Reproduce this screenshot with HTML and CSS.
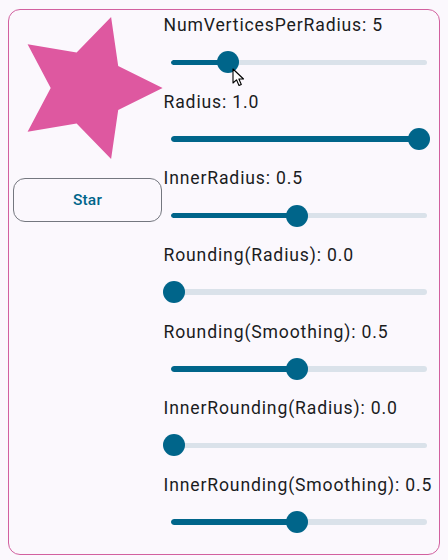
FILE: index.html
```html
<!DOCTYPE html>
<html>
<head>
<meta charset="utf-8">
<link rel="stylesheet" href="styles.css">
</head>
<body>
<div class="frame">
  <div class="left">
    <svg class="star" width="150" height="150" viewBox="0 0 150 150">
      <polygon fill="#de58a0" points="149.6,75 105.2,96.9 98.1,146 63.6,110.5 14.6,118.8 37.7,75 14.6,31.2 63.6,39.5 98.1,4 105.2,53.1"/>
    </svg>
    <button class="btn">Star</button>
  </div>
  <div class="right">
    <div class="item"><div class="label">NumVerticesPerRadius: 5</div><div class="slider"><div class="track"><div class="active" style="width:22.2%"></div></div><div class="thumb" style="--f:0.222"></div></div></div>
    <div class="item"><div class="label">Radius: 1.0</div><div class="slider"><div class="track"><div class="active" style="width:100%"></div></div><div class="thumb" style="--f:1"></div></div></div>
    <div class="item"><div class="label">InnerRadius: 0.5</div><div class="slider"><div class="track"><div class="active" style="width:50%"></div></div><div class="thumb" style="--f:0.5"></div></div></div>
    <div class="item"><div class="label">Rounding(Radius): 0.0</div><div class="slider"><div class="track"><div class="active" style="width:0%"></div></div><div class="thumb" style="--f:0"></div></div></div>
    <div class="item"><div class="label">Rounding(Smoothing): 0.5</div><div class="slider"><div class="track"><div class="active" style="width:50%"></div></div><div class="thumb" style="--f:0.5"></div></div></div>
    <div class="item"><div class="label">InnerRounding(Radius): 0.0</div><div class="slider"><div class="track"><div class="active" style="width:0%"></div></div><div class="thumb" style="--f:0"></div></div></div>
    <div class="item"><div class="label">InnerRounding(Smoothing): 0.5</div><div class="slider"><div class="track"><div class="active" style="width:50%"></div></div><div class="thumb" style="--f:0.5"></div></div></div>
  </div>
</div>
<svg class="cursor" width="14" height="19" viewBox="0 0 14 19">
  <path d="M1,1 L1,15 L4.5,11.8 L7,17.5 L9.3,16.5 L6.9,11 L11.5,11 Z" fill="#ffffff" stroke="#000000" stroke-width="1.1" stroke-linejoin="round"/>
</svg>
</body>
</html>
```
FILE: styles.css
```css
html, body {
  margin: 0;
  padding: 0;
  background: #fbf8fd;
}
body {
  position: relative;
  width: 448px;
  height: 560px;
  overflow: hidden;
  font-family: Roboto, "Liberation Sans", sans-serif;
}
.frame {
  margin: 9px 0 0 8px;
  width: 432px;
  height: 546px;
  box-sizing: border-box;
  border: 1px solid #d2609f;
  border-radius: 12px;
  padding: 3px 0 0 4px;
  display: flex;
  flex-direction: row;
}
.left {
  width: 150px;
  display: flex;
  flex-direction: column;
}
.star {
  display: block;
  width: 150px;
  height: 150px;
}
.btn {
  margin-top: 15px;
  width: 149px;
  height: 44px;
  box-sizing: border-box;
  border: 1px solid #74777f;
  border-radius: 12px;
  background: transparent;
  color: #00658a;
  font-family: Roboto, "Liberation Sans", sans-serif;
  font-weight: 500;
  font-size: 15.5px;
  letter-spacing: 0.2px;
  padding: 0;
}
.right {
  width: 267px;
  display: flex;
  flex-direction: column;
  padding-top: 0.3px;
}
.label {
  font-size: 17.6px;
  line-height: 24px;
  height: 24px;
  color: #1a1c1e;
  letter-spacing: 0.85px;
  padding-left: 0.5px;
  white-space: nowrap;
}
.slider {
  position: relative;
  height: 52.6px;
}
.track {
  position: absolute;
  left: 8px;
  right: 3px;
  top: 22.4px;
  height: 5.6px;
  border-radius: 3px;
  background: #dae2ea;
  overflow: hidden;
}
.active {
  height: 100%;
  background: #00658a;
  border-radius: 3px;
}
.thumb {
  position: absolute;
  top: 14.2px;
  left: calc(var(--f) * (100% - 22px));
  width: 22px;
  height: 22px;
  border-radius: 50%;
  background: #00658a;
}
.cursor {
  position: absolute;
  left: 232px;
  top: 67.5px;
}
```
